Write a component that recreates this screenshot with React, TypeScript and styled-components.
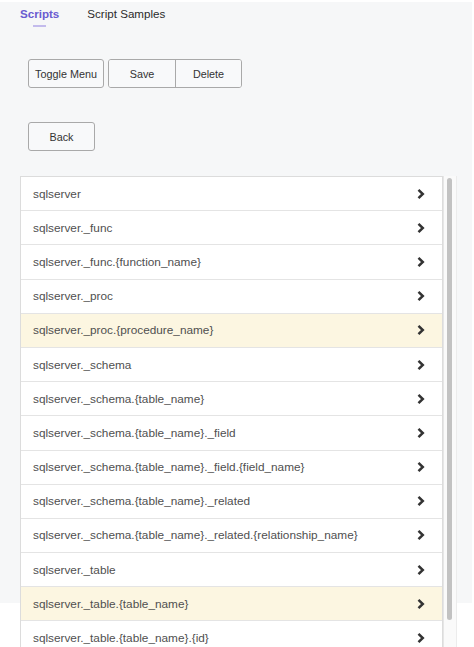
import styled, { createGlobalStyle } from "styled-components";

const GlobalStyle = createGlobalStyle`
  body {
    margin: 0;
    background: #ffffff;
    font-family: "Liberation Sans", Arial, sans-serif;
  }
`;

const rows = [
  { label: "sqlserver" },
  { label: "sqlserver._func" },
  { label: "sqlserver._func.{function_name}" },
  { label: "sqlserver._proc" },
  { label: "sqlserver._proc.{procedure_name}", active: true },
  { label: "sqlserver._schema" },
  { label: "sqlserver._schema.{table_name}" },
  { label: "sqlserver._schema.{table_name}._field" },
  { label: "sqlserver._schema.{table_name}._field.{field_name}" },
  { label: "sqlserver._schema.{table_name}._related" },
  { label: "sqlserver._schema.{table_name}._related.{relationship_name}" },
  { label: "sqlserver._table" },
  { label: "sqlserver._table.{table_name}", active: true },
  { label: "sqlserver._table.{table_name}.{id}" },
];

function Chevron() {
  return (
    <ChevronIcon width="10" height="12" viewBox="0 0 10 12">
      <polyline
        points="2.5,1.8 6.8,6 2.5,10.2"
        fill="none"
        stroke="#333"
        strokeWidth="2.5"
        strokeLinejoin="miter"
      />
    </ChevronIcon>
  );
}

export default function App() {
  return (
    <>
      <GlobalStyle />
      <Page>
        <Tabs>
          <Tab active>Scripts</Tab>
          <Tab>Script Samples</Tab>
        </Tabs>
        <Toolbar>
          <Button>Toggle Menu</Button>
          <ButtonGroup>
            <GroupButton>Save</GroupButton>
            <GroupButton>Delete</GroupButton>
          </ButtonGroup>
        </Toolbar>
        <BackRow>
          <Button wide>Back</Button>
        </BackRow>
        <ListArea>
          <List>
            {rows.map((row) => (
              <Row key={row.label} active={row.active}>
                <RowLabel>{row.label}</RowLabel>
                <Chevron />
              </Row>
            ))}
          </List>
          <ScrollTrack>
            <ScrollThumb />
          </ScrollTrack>
        </ListArea>
      </Page>
    </>
  );
}

// grey panel only covers the top 603px; the list runs past it onto white
const Page = styled.div`
  height: 647px;
  overflow: hidden;
  background: linear-gradient(#f6f7f8, #f6f7f8) no-repeat 0 2px / 472px 601px;
  display: flex;
  flex-direction: column;
`;

const Tabs = styled.div`
  display: flex;
  column-gap: 28px;
  padding: 7px 0 0 20px;
  height: 25px;
`;

const Tab = styled.div<{ active?: boolean }>`
  position: relative;
  font-size: 11.6px;
  line-height: 14px;
  font-weight: ${(p) => (p.active ? 700 : 400)};
  color: ${(p) => (p.active ? "#6a5bd0" : "#2b2b2b")};

  &::after {
    content: "";
    display: ${(p) => (p.active ? "block" : "none")};
    position: absolute;
    left: 13px;
    top: 18px;
    width: 13px;
    height: 2px;
    background: #c3bbec;
  }
`;

const Toolbar = styled.div`
  display: flex;
  column-gap: 4px;
  padding: 27px 0 0 28px;
`;

const Button = styled.button<{ wide?: boolean }>`
  height: 29px;
  width: ${(p) => (p.wide ? "67px" : "76px")};
  padding: 0;
  background: #f8f9fa;
  border: 1px solid #a9a9a9;
  border-radius: 3px;
  font-family: "Liberation Sans", Arial, sans-serif;
  font-size: 10.8px;
  color: #333;
`;

const ButtonGroup = styled.div`
  display: flex;
  border: 1px solid #a9a9a9;
  border-radius: 3px;
  overflow: hidden;
  height: 27px;
`;

const GroupButton = styled.button`
  width: 66px;
  padding: 0;
  background: #f8f9fa;
  border: none;
  font-family: "Liberation Sans", Arial, sans-serif;
  font-size: 10.8px;
  color: #333;

  & + & {
    border-left: 1px solid #a9a9a9;
  }
`;

const BackRow = styled.div`
  padding: 34px 0 0 28px;
`;

const ListArea = styled.div`
  display: flex;
  margin: 25px 0 0 20px;
  width: 437px;
  flex: 1;
  min-height: 0;
  overflow: hidden;
`;

const List = styled.div`
  width: 423px;
  flex-shrink: 0;
  box-sizing: border-box;
  border: 1px solid #dcdcdc;
  border-bottom: none;
  background: #fff;
`;

const Row = styled.div<{ active?: boolean }>`
  display: flex;
  align-items: center;
  justify-content: space-between;
  height: 33.2px;
  padding: 0 16px 0 12px;
  border-bottom: 1px solid #e4e4e4;
  background: ${(p) => (p.active ? "#fcf6e1" : "#ffffff")};
`;

const RowLabel = styled.span`
  font-size: 11.8px;
  color: #4f4f4f;
`;

const ChevronIcon = styled.svg`
  display: block;
`;

const ScrollTrack = styled.div`
  width: 14px;
  box-sizing: border-box;
  background: #fafafa;
  border-left: 1px solid #e6e6e6;
  border-right: 1px solid #ececec;
  padding: 2px 4px 0 3px;
`;

const ScrollThumb = styled.div`
  height: 442px;
  border-radius: 4px;
  background: #c2c2c2;
`;
